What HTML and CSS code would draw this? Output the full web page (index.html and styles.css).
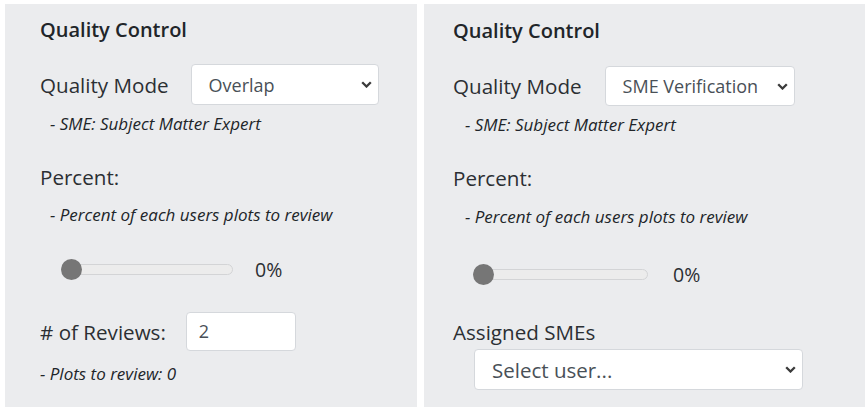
FILE: index.html
```html
<!DOCTYPE html>
<html lang="en">
<head>
<meta charset="utf-8">
<title>Quality Control</title>
<link rel="stylesheet" href="styles.css">
</head>
<body>
<div class="page">
  <section class="panel panel-a">
    <h5 class="title">Quality Control</h5>
    <div class="field-row">
      <span class="label">Quality Mode</span>
      <div class="select select-mode">
        <span class="select-text">Overlap</span>
        <svg class="chev" viewBox="0 0 11 7" width="11" height="7"><path d="M1.2 1.2l4.3 4.3 4.3-4.3" fill="none" stroke="#3a3a3a" stroke-width="2.3"/></svg>
      </div>
    </div>
    <p class="note note-1">- SME: Subject Matter Expert</p>
    <div class="label label-percent">Percent:</div>
    <p class="note note-2">- Percent of each users plots to review</p>
    <div class="slider-row">
      <div class="track"><span class="thumb"></span></div>
      <span class="value">0%</span>
    </div>
    <div class="field-row reviews-row">
      <span class="label">#&nbsp;of Reviews:</span>
      <div class="input">2</div>
    </div>
    <p class="note note-3">- Plots to review: 0</p>
  </section>

  <section class="panel panel-b">
    <h5 class="title">Quality Control</h5>
    <div class="field-row">
      <span class="label">Quality Mode</span>
      <div class="select select-mode">
        <span class="select-text">SME Verification</span>
        <svg class="chev" viewBox="0 0 11 7" width="11" height="7"><path d="M1.2 1.2l4.3 4.3 4.3-4.3" fill="none" stroke="#3a3a3a" stroke-width="2.3"/></svg>
      </div>
    </div>
    <p class="note note-1">- SME: Subject Matter Expert</p>
    <div class="label label-percent">Percent:</div>
    <p class="note note-2">- Percent of each users plots to review</p>
    <div class="slider-row">
      <div class="track"><span class="thumb"></span></div>
      <span class="value">0%</span>
    </div>
    <div class="label label-sme">Assigned SMEs</div>
    <div class="select select-user">
      <span class="select-text">Select user...</span>
      <svg class="chev" viewBox="0 0 11 7" width="11" height="7"><path d="M1.2 1.2l4.3 4.3 4.3-4.3" fill="none" stroke="#3a3a3a" stroke-width="2.3"/></svg>
    </div>
  </section>
</div>
</body>
</html>
```

FILE: styles.css
```css
* { box-sizing: border-box; }

html, body {
  margin: 0;
  padding: 0;
  background: #ffffff;
}

body {
  font-family: "Open Sans", "Noto Sans", sans-serif;
  color: #212529;
  width: 865px;
  height: 409px;
  overflow: hidden;
}

.page {
  display: flex;
  gap: 7px;
  padding: 4px 0 2px 5px;
  height: 409px;
}

.panel {
  background: #ebecee;
  display: flex;
  flex-direction: column;
  align-items: flex-start;
  height: 403px;
}

.panel-a {
  width: 412px;
  padding: 14px 0 0 35px;
}

.panel-b {
  flex: 1;
  padding: 15px 0 0 29px;
}

.title {
  margin: 0;
  font-size: 20px;
  line-height: 24px;
  font-weight: 600;
  color: #212529;
}

.label {
  font-size: 20.6px;
  line-height: 24px;
  color: #2b2f33;
  white-space: nowrap;
}

.field-row {
  display: flex;
  align-items: center;
  gap: 22px;
  margin-top: 22px;
}

.panel-b .field-row { margin-top: 23px; gap: 23px; }

.select {
  display: flex;
  align-items: center;
  justify-content: space-between;
  background: #ffffff;
  border: 1px solid #d5d8dc;
  border-radius: 4px;
  font-size: 18px;
  color: #495057;
}

.select-mode {
  width: 188px;
  height: 41px;
  padding: 0 6px 0 17px;
}

.panel-b .select-mode {
  width: 190px;
  height: 40px;
  padding: 0 6px 0 17px;
}

.select-text { white-space: nowrap; }

.chev { flex: none; }

.note {
  margin: 0;
  font-size: 17px;
  line-height: 20px;
  font-style: italic;
  color: #212529;
  padding-left: 10px;
}

.panel-b .note { padding-left: 12px; }

.note-1 { margin-top: 9px; }
.label-percent { margin-top: 31px; }
.note-2 { margin-top: 16px; }

.panel-b .note-2 { margin-top: 17px; }

.slider-row {
  display: flex;
  align-items: center;
  height: 20px;
  margin-top: 34px;
  margin-left: 21px;
}

.panel-b .slider-row { margin-top: 37px; margin-left: 20px; }

.track {
  position: relative;
  width: 172px;
  height: 11px;
  border: 1px solid #d3d4d6;
  border-radius: 6px;
  background: #ececec;
}

.panel-b .track { width: 175px; }

.thumb {
  position: absolute;
  left: -1px;
  top: 50%;
  width: 21px;
  height: 21px;
  margin-top: -10.5px;
  border-radius: 50%;
  background: #767676;
}

.value {
  margin-left: 22px;
  font-size: 19.5px;
  color: #2b2f33;
}

.panel-b .value { margin-left: 25px; }

.reviews-row { margin-top: 33px; gap: 20px; }

.input {
  width: 110px;
  height: 39px;
  background: #ffffff;
  border: 1px solid #d5d8dc;
  border-radius: 4px;
  font-size: 18px;
  line-height: 37px;
  padding-left: 12px;
  color: #495057;
}

.note-3 {
  padding-left: 0;
  margin-top: 13px;
}

.label-sme { margin-top: 36px; }

.select-user {
  width: 329px;
  height: 41px;
  margin-top: 5px;
  margin-left: 21px;
  padding: 0 6px 0 17px;
  font-size: 20.5px;
}
```
